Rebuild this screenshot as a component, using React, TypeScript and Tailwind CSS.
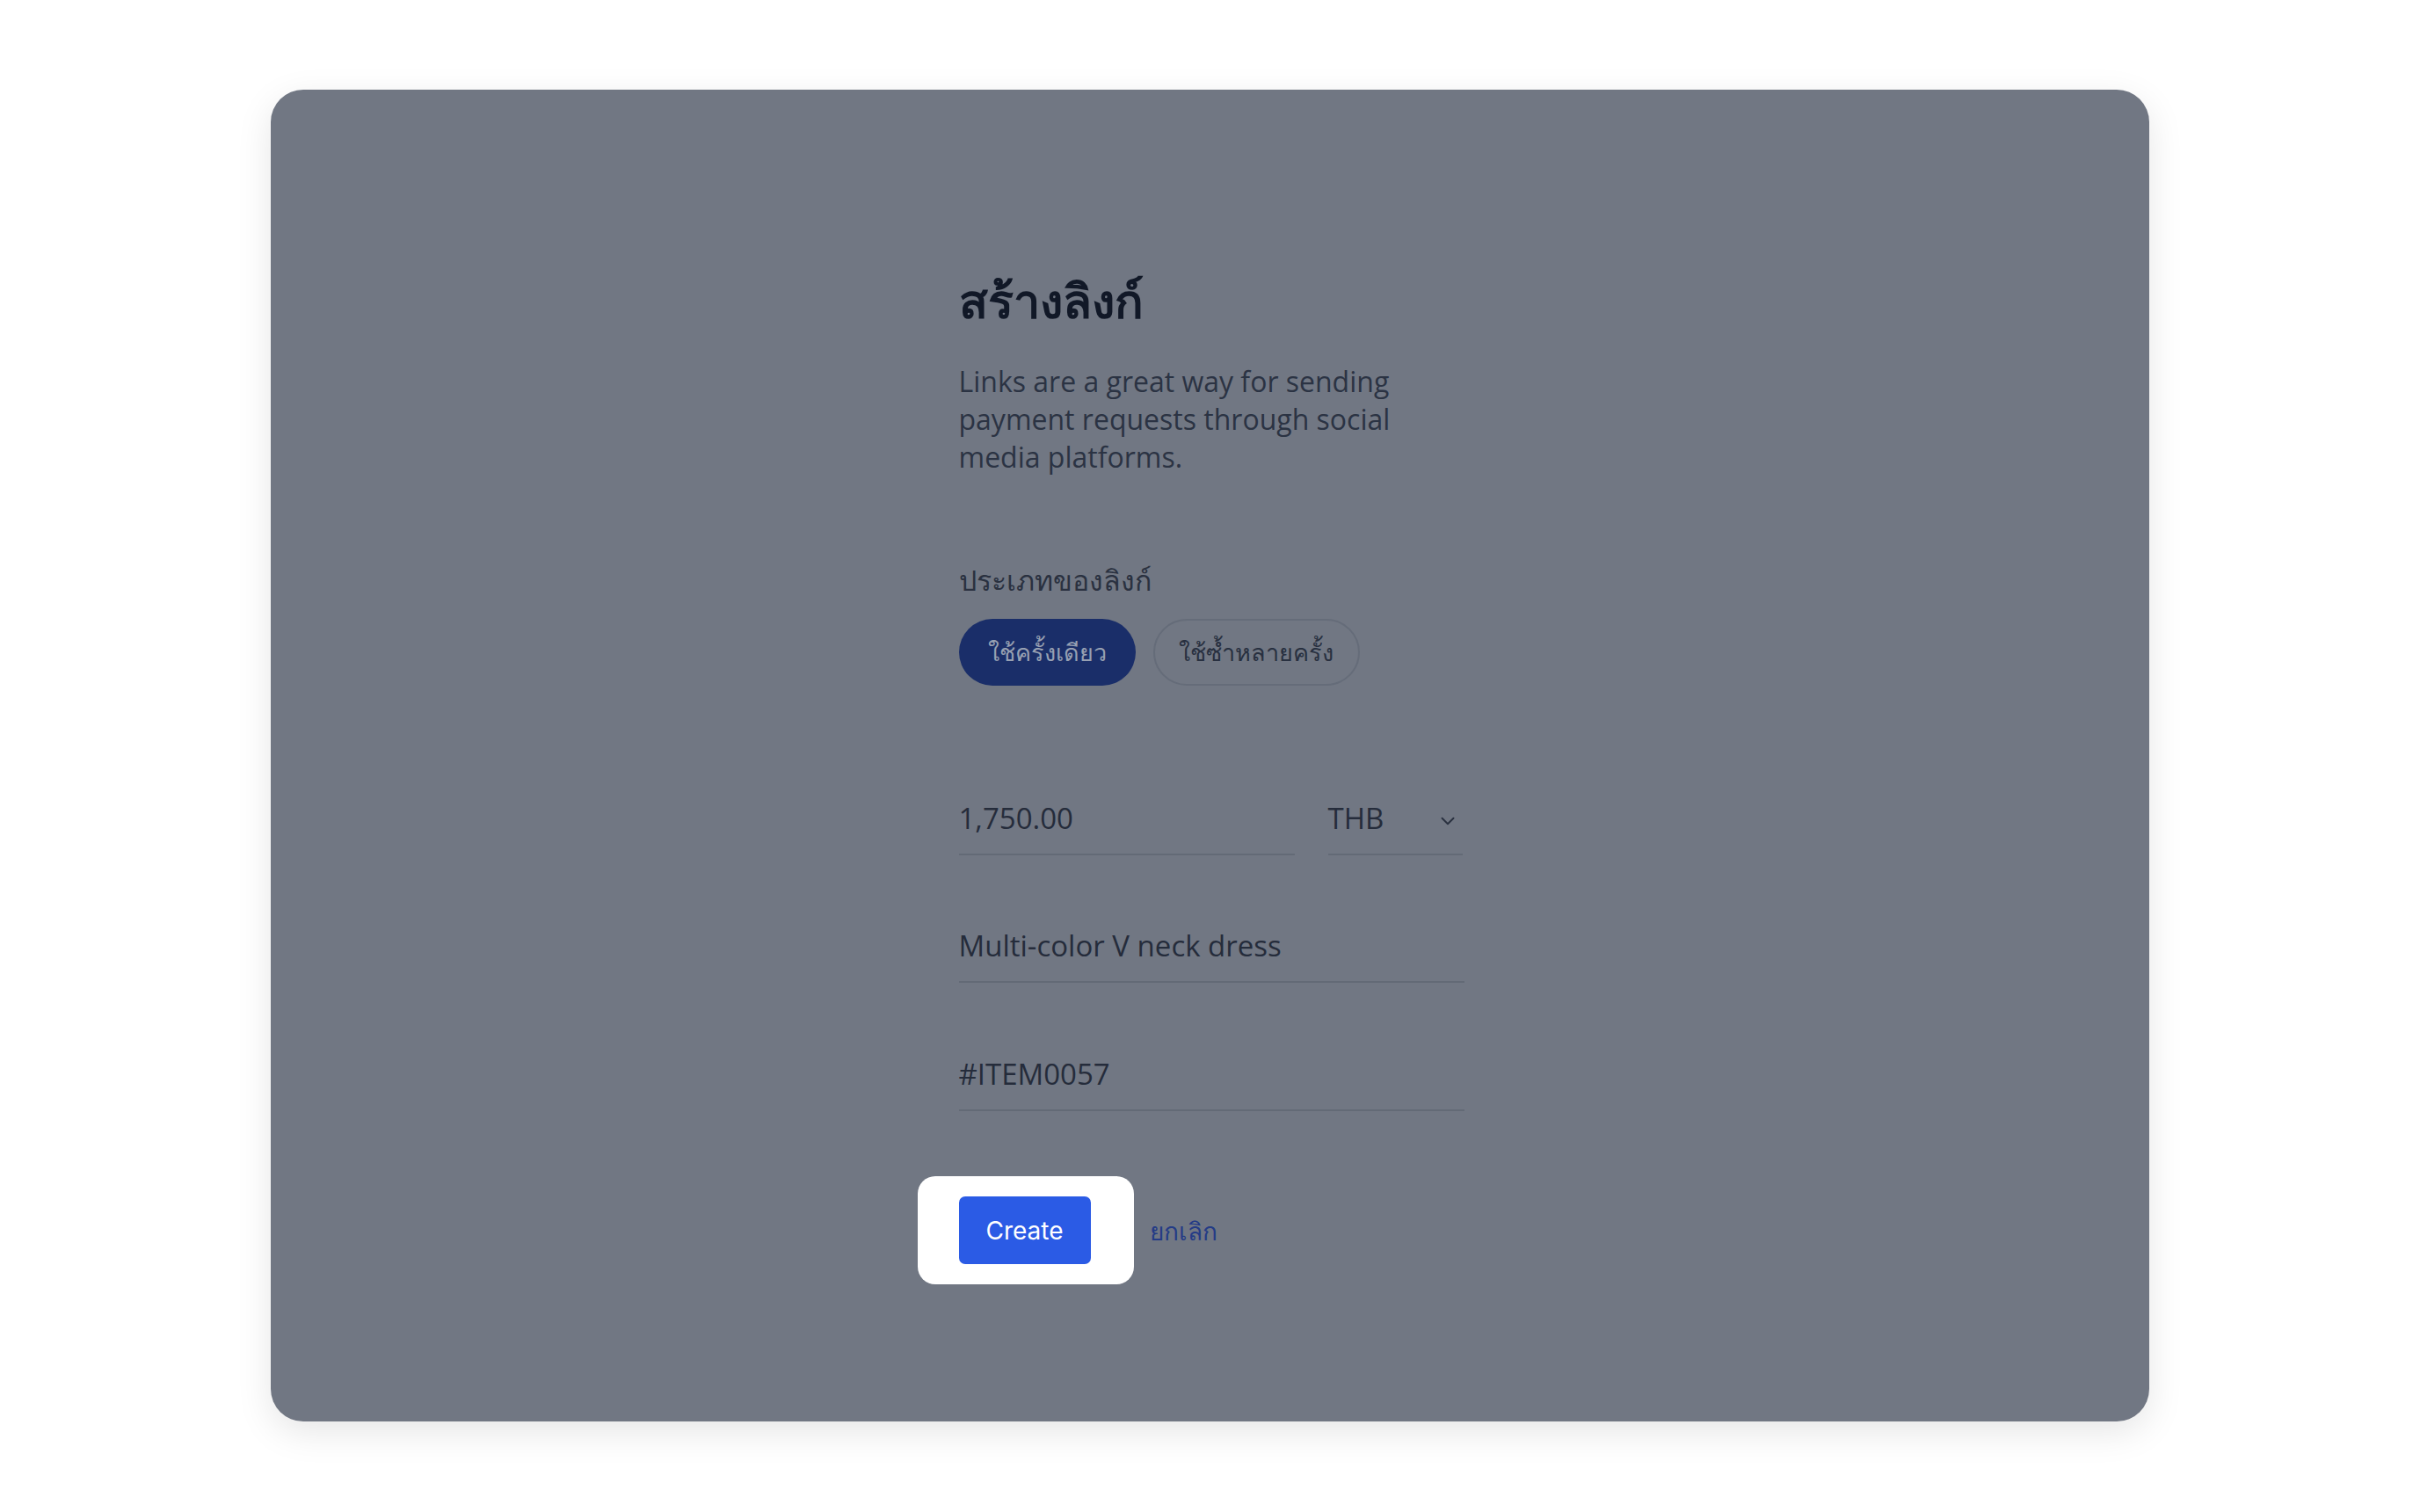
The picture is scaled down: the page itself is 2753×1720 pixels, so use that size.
import { ChevronDown } from 'lucide-react';

const latin = "font-['Open_Sans','Noto_Sans',sans-serif]";

function Field({ value, className = '' }: { value: string; className?: string }) {
  return (
    <div className={`border-b-2 border-[#636a76] pb-[20px] ${className}`}>
      <span className="text-[33px] leading-[40px] text-[#252c3b]">{value}</span>
    </div>
  );
}

export default function App() {
  return (
    <div className={`min-h-screen bg-white flex justify-center pt-[102px] ${latin}`}>
      <div className="w-[2137px] h-[1515px] rounded-[37px] bg-[#717783] shadow-[0_12px_40px_rgba(0,0,0,0.10)] flex justify-center">
        <div className="w-[575px] pt-[204px] ml-[3px]">
          <h1 className="text-[54px] leading-[70px] font-bold text-[#111827]">สร้างลิงก์</h1>
          <p className="mt-[36px] text-[32px] leading-[43px] text-[#2b3343]">
            Links are a great way for sending payment requests through social media platforms.
          </p>

          <div className="mt-[97px] text-[32px] leading-[44px] text-[#2a3140]">ประเภทของลิงก์</div>
          <div className="mt-[22px] flex gap-[20px]">
            <button className="h-[76px] w-[201px] rounded-full bg-[#1a2e69] text-[27px] text-[#97a0b2]">ใช้ครั้งเดียว</button>
            <button className="h-[76px] w-[235px] rounded-full border-2 border-[#656c79] text-[27px] text-[#283040]">ใช้ซ้ำหลายครั้ง</button>
          </div>

          <div className="mt-[131px] flex gap-[38px]">
            <Field value="1,750.00" className="w-[382px]" />
            <div className="w-[153px] border-b-2 border-[#636a76] pb-[20px] flex items-center justify-between">
              <span className="text-[33px] leading-[40px] text-[#252c3b]">THB</span>
              <ChevronDown className="mr-[4px] mt-[6px] text-[#2a3140]" size={26} strokeWidth={1.8} />
            </div>
          </div>
          <Field value="Multi-color V neck dress" className="mt-[83px]" />
          <Field value="#ITEM0057" className="mt-[84px]" />

          <div className="mt-[74px] flex items-center">
            <div className="-ml-[47px] rounded-[20px] bg-white pl-[47px] pr-[49px] py-[23px]">
              <button className="h-[77px] w-[150px] rounded-[7px] bg-[#2b5be5] text-[28px] text-white font-['Inter',sans-serif]">Create</button>
            </div>
            <button className="ml-[18px] text-[28px] text-[#243b86]">ยกเลิก</button>
          </div>
        </div>
      </div>
    </div>
  );
}
